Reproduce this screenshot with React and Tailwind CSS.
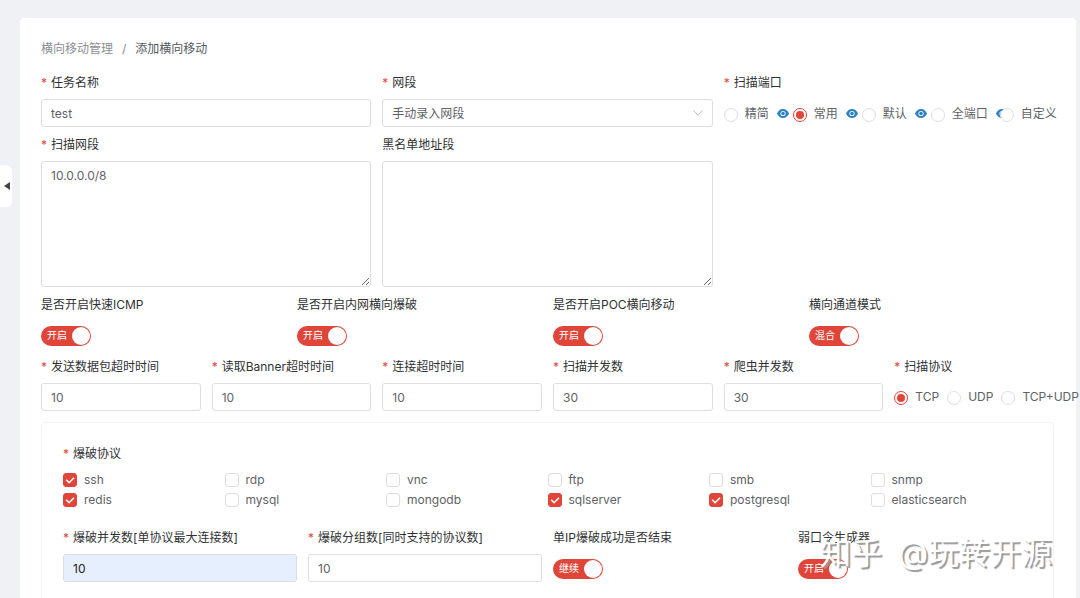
import { useId, useState } from "react";

const inputClass =
  "block h-7 w-full min-w-0 rounded-[3px] border border-[#dcdee2] bg-white px-[9px] text-xs text-[#606266] outline-none focus:border-[#e0453a]";

const labelClass = "block whitespace-nowrap pt-[2px] leading-8 text-[#303133]";

function LabelText({ required, children }) {
  return (
    <>
      {required && <span className="mr-1 text-[#e0453a]">*</span>}
      {children}
    </>
  );
}

function Field({ label, required, render }) {
  const id = useId();
  return (
    <div className="min-w-0">
      <label htmlFor={id} className={labelClass}>
        <LabelText required={required}>{label}</LabelText>
      </label>
      {render(id)}
    </div>
  );
}

function TextField({ label, value, filled }) {
  return (
    <Field
      label={label}
      required
      render={(id) => (
        <input
          id={id}
          type="text"
          defaultValue={value}
          className={filled ? `${inputClass} bg-[#e6effd]! text-[#202124]!` : inputClass}
        />
      )}
    />
  );
}

function TextArea({ label, required, value }) {
  return (
    <Field
      label={label}
      required={required}
      render={(id) => (
        <textarea
          id={id}
          defaultValue={value}
          className="block h-[126px] w-full resize-y rounded-[3px] border border-[#dcdee2] bg-white px-[9px] py-[5px] text-xs leading-[18px] text-[#606266] outline-none"
        />
      )}
    />
  );
}

function SwitchField({ label, on }) {
  const [checked, setChecked] = useState(true);
  return (
    <Field
      label={label}
      render={(id) => (
        <div className="flex h-7 items-center pt-px">
          <label className="relative flex h-5 w-[50px] cursor-pointer items-center justify-between rounded-full bg-[#c8c9cc] pr-px pl-[6px] text-[10px] text-white has-checked:bg-[#e0453a]">
            <input
              id={id}
              type="checkbox"
              role="switch"
              checked={checked}
              onChange={(e) => setChecked(e.target.checked)}
              className="absolute inset-0 cursor-pointer appearance-none"
            />
            <span>{on}</span>
            <span className="size-[18px] rounded-full bg-white" />
          </label>
        </div>
      )}
    />
  );
}

function Eye() {
  return (
    <svg viewBox="0 0 24 18" className="ml-2 h-[9px] w-3 shrink-0" aria-hidden="true">
      <path d="M12 0C6.600 0 2 3.600 0 9c2 5.400 6.600 9 12 9s10-3.600 12-9c-2-5.400-6.600-9-12-9z" fill="#2b80c5" />
      <circle cx="12" cy="9" r="5.200" fill="#fff" />
      <circle cx="12" cy="9" r="3.600" fill="#2b80c5" />
    </svg>
  );
}

function Radio({ name, text, defaultChecked, eye, className }) {
  return (
    <label className={`flex shrink-0 items-center whitespace-nowrap text-[#606266] ${className}`}>
      <span className="relative mt-[2px] mr-[7px] grid size-[14px] shrink-0 place-items-center">
        <input
          type="radio"
          name={name}
          defaultChecked={defaultChecked}
          className="peer size-[14px] appearance-none rounded-full border border-[#dcdee2] bg-white checked:border-[#e0453a]"
        />
        <span className="pointer-events-none absolute hidden size-2 rounded-full bg-[#e0453a] peer-checked:block" />
      </span>
      {text}
      {eye && <Eye />}
    </label>
  );
}

function Check({ text, defaultChecked }) {
  return (
    <label className="flex h-5 items-center text-[#606266]">
      <span className="relative mr-[7px] grid size-[14px] shrink-0 place-items-center">
        <input
          type="checkbox"
          defaultChecked={defaultChecked}
          className="peer size-[14px] appearance-none rounded-[3px] border border-[#dcdee2] bg-white checked:border-[#e0453a] checked:bg-[#e0453a]"
        />
        <svg
          viewBox="0 0 14 14"
          className="pointer-events-none absolute hidden size-[14px] peer-checked:block"
          fill="none"
          stroke="#fff"
          strokeWidth="1.6"
          aria-hidden="true"
        >
          <path d="M3.200 6.800l2.900 2.900 4.900-5" />
        </svg>
      </span>
      {text}
    </label>
  );
}

const ports = [
  { text: "精简", eye: true },
  { text: "常用", eye: true, defaultChecked: true },
  { text: "默认", eye: true },
  { text: "全端口", eye: true },
  { text: "自定义" },
];

const protocols = [
  ["ssh", true],
  ["rdp", false],
  ["vnc", false],
  ["ftp", false],
  ["smb", false],
  ["snmp", false],
  ["redis", true],
  ["mysql", false],
  ["mongodb", false],
  ["sqlserver", true],
  ["postgresql", true],
  ["elasticsearch", false],
];

export default function App() {
  return (
    <div className="relative h-screen overflow-hidden bg-[#eff1f5] pt-[18px] pr-1 pl-5 font-['Inter','Noto_Sans_CJK_SC',sans-serif] text-xs">
      <button
        type="button"
        aria-label="展开菜单"
        className="absolute top-[165px] left-0 grid h-[42px] w-3 place-items-center rounded-r-md bg-white"
      >
        <svg viewBox="0 0 6 8" className="ml-[2px] h-2 w-[6px]" aria-hidden="true">
          <path d="M6 0v8L0 4z" fill="#444" />
        </svg>
      </button>

      <main className="min-h-full rounded-[4px] bg-white pt-[22px] pr-[22px] pb-[21px] pl-[21px]">
        <nav className="mb-[7px] flex gap-[9px] leading-[18px] text-[#8c8e92]">
          <a href="#list">横向移动管理</a>
          <span>/</span>
          <span className="text-[#55585e]">添加横向移动</span>
        </nav>

        <form>
          <div className="grid grid-cols-3 gap-x-[11px]">
            <TextField label="任务名称" value="test" />
            <Field
              label="网段"
              required
              render={(id) => (
                <div className="relative">
                  <select id={id} className={`${inputClass} appearance-none pt-px`}>
                    <option>手动录入网段</option>
                  </select>
                  <svg
                    viewBox="0 0 10 6"
                    className="pointer-events-none absolute top-[11px] right-[10px] h-[6px] w-[10px]"
                    fill="none"
                    stroke="#b8bbc1"
                    aria-hidden="true"
                  >
                    <path d="M.5 .5L5 5.300 9.500 .5" />
                  </svg>
                </div>
              )}
            />
            <fieldset className="min-w-0">
              <legend className={labelClass}>
                <LabelText required>扫描端口</LabelText>
              </legend>
              <div className="flex h-7 items-center pt-px">
                {ports.map((p) => (
                  <Radio key={p.text} name="port" className="w-[69px]" {...p} />
                ))}
              </div>
            </fieldset>
            <TextArea label="扫描网段" required value="10.0.0.0/8" />
            <TextArea label="黑名单地址段" value="" />
          </div>

          <div className="grid grid-cols-4 gap-x-[11px]">
            <SwitchField label="是否开启快速ICMP" on="开启" />
            <SwitchField label="是否开启内网横向爆破" on="开启" />
            <SwitchField label="是否开启POC横向移动" on="开启" />
            <SwitchField label="横向通道模式" on="混合" />
          </div>

          <div className="grid grid-cols-6 gap-x-[11px]">
            <TextField label="发送数据包超时时间" value="10" />
            <TextField label="读取Banner超时时间" value="10" />
            <TextField label="连接超时时间" value="10" />
            <TextField label="扫描并发数" value="30" />
            <TextField label="爬虫并发数" value="30" />
            <fieldset className="min-w-0">
              <legend className={labelClass}>
                <LabelText required>扫描协议</LabelText>
              </legend>
              <div className="flex h-7 items-center">
                <Radio name="protocol" text="TCP" defaultChecked className="mr-2" />
                <Radio name="protocol" text="UDP" className="mr-2" />
                <Radio name="protocol" text="TCP+UDP" className="" />
              </div>
            </fieldset>
          </div>

          <section className="mt-[11px] rounded-[4px] border border-[#f3f4f6] px-[21px] pt-[13px] pb-[21px]">
            <fieldset className="min-w-0">
              <legend className={labelClass}>
                <LabelText required>爆破协议</LabelText>
              </legend>
              <div className="grid grid-cols-6">
                {protocols.map(([text, checked]) => (
                  <Check key={text} text={text} defaultChecked={checked} />
                ))}
              </div>
            </fieldset>
            <div className="mt-[10px] grid grid-cols-4 gap-x-[11px]">
              <TextField label="爆破并发数[单协议最大连接数]" value="10" filled />
              <TextField label="爆破分组数[同时支持的协议数]" value="10" />
              <SwitchField label="单IP爆破成功是否结束" on="继续" />
              <SwitchField label="弱口令生成器" on="开启" />
            </div>
          </section>
        </form>
      </main>

      <div className="pointer-events-none absolute right-7 bottom-[23px] flex gap-4 text-[31px] leading-[44px] text-white [text-shadow:2px_2px_1px_#999]">
        <span>知乎</span>
        <span>@玩转开源</span>
      </div>
    </div>
  );
}
